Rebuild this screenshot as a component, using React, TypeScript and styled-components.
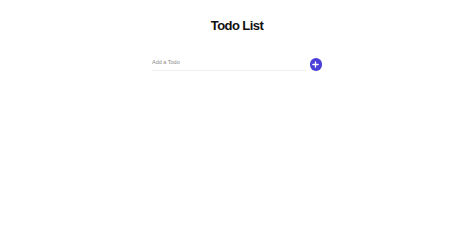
import * as React from 'react';
import styled, {createGlobalStyle} from 'styled-components';

const GlobalStyle = createGlobalStyle`
  html, body {
    margin: 0;
    padding: 0;
    background: #ffffff;
  }
  body {
    font-family: "Liberation Sans", Arial, sans-serif;
  }
`;

const Page = styled.main`
  width: 170px;
  margin: 0 auto;
  padding-top: 19px;
`;

const Title = styled.h1`
  margin: 0;
  text-align: center;
  font-size: 13px;
  line-height: 14px;
  font-weight: 700;
  letter-spacing: -0.55px;
  color: #111111;
`;

const TodoForm = styled.form`
  display: flex;
  align-items: flex-start;
  gap: 4px;
  margin-top: 25px;
`;

const TodoInput = styled.input`
  flex: 1;
  min-width: 0;
  box-sizing: border-box;
  height: 12.5px;
  padding: 0 0 4.5px 0;
  border: none;
  border-bottom: 1px solid #eeeeee;
  outline: none;
  background: transparent;
  font-family: inherit;
  font-size: 5.5px;
  color: #333333;

  &::placeholder {
    color: #8a8a8a;
  }
`;

const AddButton = styled.button`
  flex: none;
  width: 12.5px;
  height: 12.5px;
  padding: 0;
  border: none;
  border-radius: 50%;
  background: #4b3fd8;
  display: flex;
  align-items: center;
  justify-content: center;
  cursor: pointer;
`;

const PlusIcon = () => (
  <svg width="7" height="7" viewBox="0 0 10 10">
    <path d="M5 1.2v7.6M1.2 5h7.6" stroke="#ffffff" strokeWidth="1.8" strokeLinecap="round" />
  </svg>
);

export default function App() {
  const [text, setText] = React.useState('');
  return (
    <>
      <GlobalStyle />
      <Page>
        <Title>Todo List</Title>
        <TodoForm onSubmit={(e) => e.preventDefault()}>
          <TodoInput
            placeholder="Add a Todo"
            value={text}
            onChange={(e) => setText(e.target.value)}
          />
          <AddButton type="submit" aria-label="Add todo">
            <PlusIcon />
          </AddButton>
        </TodoForm>
      </Page>
    </>
  );
}
